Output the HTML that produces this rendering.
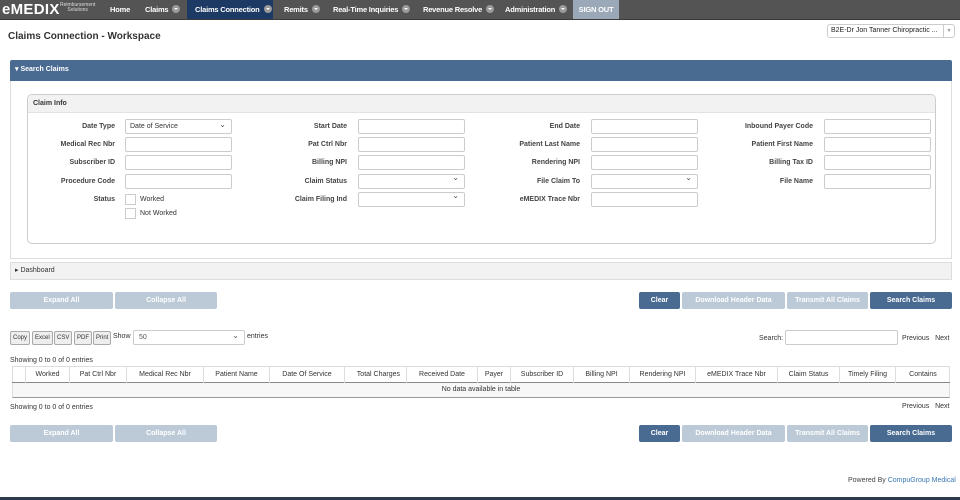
<!DOCTYPE html>
<html><head><meta charset="utf-8"><style>
*{box-sizing:border-box;margin:0;padding:0}
body{width:960px;height:500px;background:#fff;font-family:"Liberation Sans",sans-serif;color:#333;position:relative;overflow:hidden;font-size:7.5px}
.a{position:absolute}
.nav{left:0;top:0;width:960px;height:20px;background:#545454;border-bottom:1px solid #3a3a3a}
.ni{top:0;height:19px;line-height:19px;color:#fff;font-weight:bold;font-size:7.5px;letter-spacing:-.2px}
.dd{display:inline-block;width:8px;height:8px;border-radius:50%;background:#9a9a9a;vertical-align:-1px;margin-left:4px;position:relative}
.dd:after{content:"";position:absolute;left:2px;top:3px;border-left:2px solid transparent;border-right:2px solid transparent;border-top:2px solid #fff}
.lbl{font-weight:bold;color:#444;text-align:right;width:110px;font-size:7px;line-height:15px}
.inp{height:15px;width:107px;border:1px solid #ccc;border-radius:2px;background:#fff}
.sel:after{content:"⌄";position:absolute;right:5px;top:-2px;font-size:8px;color:#555}
.btn{height:17px;line-height:17px;text-align:center;color:#fff;font-weight:bold;font-size:7px;border-radius:2px}
.dk{background:#4a6b91}.lt{background:#bccad8}
.sm{top:331px;height:14px;line-height:12px;border:1px solid #aaa;border-radius:2px;background:#eee;font-size:6px;padding:0 2px;color:#333}
.th{top:367px;height:16px;line-height:16px;font-size:7px;color:#333;text-align:center;border-right:1px solid #ddd}
</style></head><body>
<div class="a nav"></div>
<div class="a" style="left:2px;top:1px;color:#fff;font-weight:bold;font-size:15px;line-height:17px;letter-spacing:.3px">eMEDIX</div>
<div class="a" style="left:60px;top:3px;color:#ddd;font-size:5px;line-height:5px;text-align:center">Reimbursement<br>Solutions</div>
<div class="a ni" style="left:110px">Home</div>
<div class="a ni" style="left:145px">Claims<span class="dd"></span></div>
<div class="a ni" style="left:187px;width:86px;background:#1c3a63;padding-left:8px">Claims Connection<span class="dd"></span></div>
<div class="a ni" style="left:284px">Remits<span class="dd"></span></div>
<div class="a ni" style="left:333px">Real-Time Inquiries<span class="dd"></span></div>
<div class="a ni" style="left:423px">Revenue Resolve<span class="dd"></span></div>
<div class="a ni" style="left:505px">Administration<span class="dd"></span></div>
<div class="a ni" style="left:573px;width:46px;background:#9aa8b8;text-align:center">SIGN OUT</div>

<div class="a" style="left:8px;top:31px;font-size:10px;font-weight:bold;color:#333">Claims Connection - Workspace</div>
<div class="a" style="left:827px;top:24px;width:128px;height:14px;border:1px solid #ccc;border-radius:3px;font-size:7px;line-height:12px;padding-left:3px;color:#222">B2E-Dr Jon Tanner Chiropractic ...<span style="position:absolute;right:0;top:0;width:11px;height:12px;border-left:1px solid #ccc;text-align:center;color:#999;font-size:6px">▾</span></div>

<div class="a" style="left:10px;top:60px;width:942px;height:21px;background:#4a6b91;border-radius:2px 2px 0 0;color:#fff;font-weight:bold;font-size:7px;line-height:20px;padding-left:5px">▾ Search Claims</div>
<div class="a" style="left:10px;top:81px;width:942px;height:178px;border:1px solid #ddd;border-top:none"></div>
<div class="a" style="left:27px;top:94px;width:909px;height:150px;border:1px solid #ccc;border-radius:5px;overflow:hidden"><div style="height:18px;background:#f2f2f2;border-bottom:1px solid #e2e2e2;font-weight:bold;font-size:7px;line-height:18px;padding-left:5px">Claim Info</div></div>

<!-- col1 -->
<div class="a lbl" style="left:5px;top:119px">Date Type</div><div class="a inp sel" style="left:125px;top:119px;font-size:7px;line-height:13px;padding-left:4px">Date of Service</div>
<div class="a lbl" style="left:5px;top:137px">Medical Rec Nbr</div><div class="a inp" style="left:125px;top:137px"></div>
<div class="a lbl" style="left:5px;top:155px">Subscriber ID</div><div class="a inp" style="left:125px;top:155px"></div>
<div class="a lbl" style="left:5px;top:174px">Procedure Code</div><div class="a inp" style="left:125px;top:174px"></div>
<div class="a lbl" style="left:5px;top:192px">Status</div>
<div class="a" style="left:125px;top:194px;width:11px;height:11px;border:1px solid #ccc"></div><div class="a" style="left:140px;top:193px;font-size:7px;line-height:13px">Worked</div>
<div class="a" style="left:125px;top:208px;width:11px;height:11px;border:1px solid #ccc"></div><div class="a" style="left:140px;top:207px;font-size:7px;line-height:13px">Not Worked</div>
<!-- col2 -->
<div class="a lbl" style="left:237px;top:119px">Start Date</div><div class="a inp" style="left:358px;top:119px"></div>
<div class="a lbl" style="left:237px;top:137px">Pat Ctrl Nbr</div><div class="a inp" style="left:358px;top:137px"></div>
<div class="a lbl" style="left:237px;top:155px">Billing NPI</div><div class="a inp" style="left:358px;top:155px"></div>
<div class="a lbl" style="left:237px;top:174px">Claim Status</div><div class="a inp sel" style="left:358px;top:174px"></div>
<div class="a lbl" style="left:237px;top:192px">Claim Filing Ind</div><div class="a inp sel" style="left:358px;top:192px"></div>
<!-- col3 -->
<div class="a lbl" style="left:470px;top:119px">End Date</div><div class="a inp" style="left:591px;top:119px"></div>
<div class="a lbl" style="left:470px;top:137px">Patient Last Name</div><div class="a inp" style="left:591px;top:137px"></div>
<div class="a lbl" style="left:470px;top:155px">Rendering NPI</div><div class="a inp" style="left:591px;top:155px"></div>
<div class="a lbl" style="left:470px;top:174px">File Claim To</div><div class="a inp sel" style="left:591px;top:174px"></div>
<div class="a lbl" style="left:470px;top:192px">eMEDIX Trace Nbr</div><div class="a inp" style="left:591px;top:192px"></div>
<!-- col4 -->
<div class="a lbl" style="left:703px;top:119px">Inbound Payer Code</div><div class="a inp" style="left:824px;top:119px"></div>
<div class="a lbl" style="left:703px;top:137px">Patient First Name</div><div class="a inp" style="left:824px;top:137px"></div>
<div class="a lbl" style="left:703px;top:155px">Billing Tax ID</div><div class="a inp" style="left:824px;top:155px"></div>
<div class="a lbl" style="left:703px;top:174px">File Name</div><div class="a inp" style="left:824px;top:174px"></div>

<div class="a" style="left:10px;top:262px;width:942px;height:18px;background:#f2f2f2;border:1px solid #ddd;font-size:7px;line-height:16px;padding-left:4px">▸ Dashboard</div>

<div class="a btn lt" style="left:10px;top:292px;width:103px">Expand All</div>
<div class="a btn lt" style="left:115px;top:292px;width:102px">Collapse All</div>
<div class="a btn dk" style="left:639px;top:292px;width:41px">Clear</div>
<div class="a btn lt" style="left:682px;top:292px;width:103px">Download Header Data</div>
<div class="a btn lt" style="left:787px;top:292px;width:81px">Transmit All Claims</div>
<div class="a btn dk" style="left:870px;top:292px;width:82px">Search Claims</div>

<div class="a sm" style="left:10px">Copy</div>
<div class="a sm" style="left:32px">Excel</div>
<div class="a sm" style="left:54px">CSV</div>
<div class="a sm" style="left:74px">PDF</div>
<div class="a sm" style="left:93px">Print</div>
<div class="a" style="left:113px;top:333px;font-size:7px">Show</div>
<div class="a inp sel" style="left:133px;top:330px;width:112px;font-size:7px;line-height:13px;padding-left:5px;color:#555">50</div>
<div class="a" style="left:247px;top:333px;font-size:7px">entries</div>
<div class="a" style="left:759px;top:335px;font-size:7px">Search:</div>
<div class="a inp" style="left:785px;top:330px;width:113px"></div>
<div class="a" style="left:902px;top:335px;font-size:7px">Previous&nbsp;&nbsp; Next</div>

<div class="a" style="left:10px;top:357px;font-size:7px">Showing 0 to 0 of 0 entries</div>
<div class="a" style="left:12px;top:366px;width:938px;height:32px;border:1px solid #ddd;border-bottom:1px solid #999"></div>
<div class="a" style="left:12px;top:382px;width:938px;border-top:1px solid #888"></div>
<div class="a" style="left:13px;top:383px;width:936px;height:14px;background:#f7f7f7;text-align:center;font-size:7px;line-height:14px">No data available in table</div>
<div class="a th" style="left:12px;width:14px"></div>
<div class="a th" style="left:26px;width:44px">Worked</div>
<div class="a th" style="left:70px;width:57px">Pat Ctrl Nbr</div>
<div class="a th" style="left:127px;width:77px">Medical Rec Nbr</div>
<div class="a th" style="left:204px;width:66px">Patient Name</div>
<div class="a th" style="left:270px;width:75px">Date Of Service</div>
<div class="a th" style="left:345px;width:62px;text-align:right;padding-right:6px">Total Charges</div>
<div class="a th" style="left:407px;width:71px">Received Date</div>
<div class="a th" style="left:478px;width:33px">Payer</div>
<div class="a th" style="left:511px;width:63px">Subscriber ID</div>
<div class="a th" style="left:574px;width:56px">Billing NPI</div>
<div class="a th" style="left:630px;width:66px">Rendering NPI</div>
<div class="a th" style="left:696px;width:82px">eMEDIX Trace Nbr</div>
<div class="a th" style="left:778px;width:62px">Claim Status</div>
<div class="a th" style="left:840px;width:56px">Timely Filing</div>
<div class="a th" style="left:896px;width:54px;border-right:none">Contains</div>

<div class="a" style="left:10px;top:404px;font-size:7px">Showing 0 to 0 of 0 entries</div>
<div class="a" style="left:902px;top:403px;font-size:7px">Previous&nbsp;&nbsp; Next</div>

<div class="a btn lt" style="left:10px;top:425px;width:103px">Expand All</div>
<div class="a btn lt" style="left:115px;top:425px;width:102px">Collapse All</div>
<div class="a btn dk" style="left:639px;top:425px;width:41px">Clear</div>
<div class="a btn lt" style="left:682px;top:425px;width:103px">Download Header Data</div>
<div class="a btn lt" style="left:787px;top:425px;width:81px">Transmit All Claims</div>
<div class="a btn dk" style="left:870px;top:425px;width:82px">Search Claims</div>

<div class="a" style="left:848px;top:477px;font-size:7px;color:#444">Powered By <span style="color:#3a78b5">CompuGroup Medical</span></div>
<div class="a" style="left:0;top:497px;width:960px;height:3px;background:#2c3a4a"></div>
</body></html>
